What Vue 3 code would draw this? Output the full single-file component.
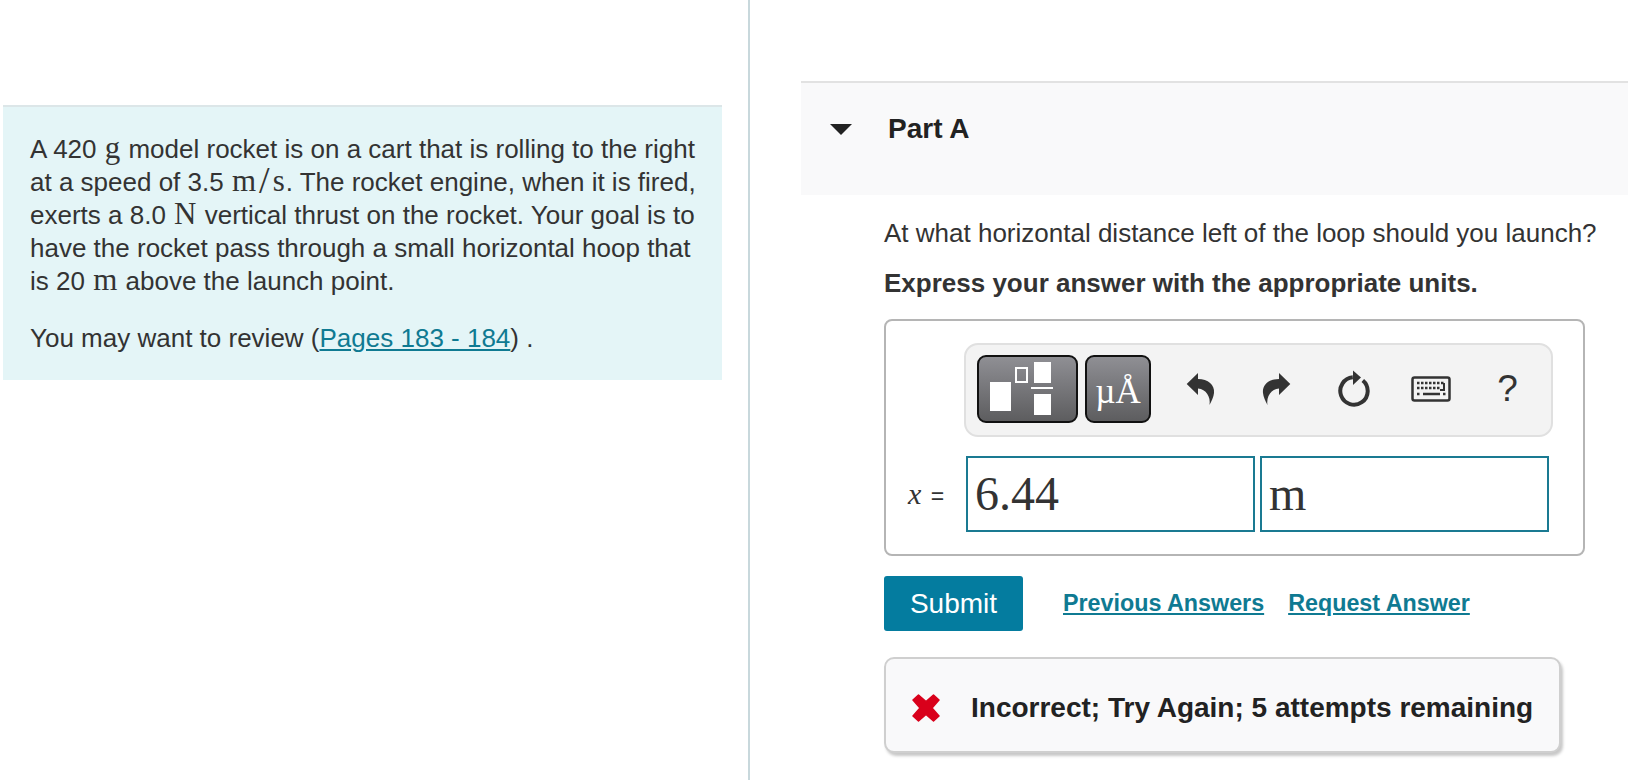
<script setup>
const attempts = 5;
</script>

<template>
  <main class="page">
    <section class="intro">
      <div class="intro-box">
        <p class="statement">
          <span class="line">A 420 <span class="unit">g</span> model rocket is on a cart that is rolling to the right</span>
          <span class="line">at a speed of 3.5 <span class="unit">m<span class="slash">/</span>s</span>. The rocket engine, when it is fired,</span>
          <span class="line">exerts a 8.0 <span class="unit">N</span> vertical thrust on the rocket. Your goal is to</span>
          <span class="line">have the rocket pass through a small horizontal hoop that</span>
          <span class="line">is 20 <span class="unit">m</span> above the launch point.</span>
        </p>
        <p class="review">You may want to review (<a href="#">Pages 183 - 184</a>) .</p>
      </div>
    </section>

    <section class="part">
      <header class="part-head">
        <span class="caret"></span>
        <h2>Part A</h2>
      </header>

      <div class="part-body">
        <p class="question">At what horizontal distance left of the loop should you launch?</p>
        <p class="hint">Express your answer with the appropriate units.</p>

        <div class="answer-box">
          <div class="toolbar">
            <button class="tool-btn frac-btn" aria-label="Templates">
              <svg width="97" height="64" viewBox="0 0 97 64">
                <rect x="11" y="25" width="21" height="29" fill="#fff" />
                <rect x="37" y="11" width="11" height="14" fill="none" stroke="#fff" stroke-width="2" />
                <rect x="55" y="5" width="17" height="21" fill="#fff" />
                <rect x="52" y="30" width="22" height="2" fill="#fff" />
                <rect x="55" y="37" width="17" height="21" fill="#fff" />
              </svg>
            </button>
            <button class="tool-btn unit-btn">µÅ</button>

            <span class="tool-icon">
              <svg width="32" height="36" viewBox="0 0 32 36">
                <path d="M2.700 13 14 2v6c10 0 17 6 16 14-.4 4-2.400 8-4.500 12 1.500-8-3.500-16-11.500-16.500V24Z" fill="#333" />
              </svg>
            </span>
            <span class="tool-icon">
              <svg width="32" height="36" viewBox="0 0 32 36">
                <path d="M29.300 13 18 2v6C8 8 1 14 2 22c.4 4 2.400 8 4.500 12-1.500-8 3.500-16 11.500-16.500V24Z" fill="#333" />
              </svg>
            </span>
            <span class="tool-icon">
              <svg width="36" height="38" viewBox="0 0 36 38">
                <path d="M26.800 10.500A13.700 13.700 0 1 1 16.800 7.350" fill="none" stroke="#333" stroke-width="4" />
                <path d="M17 0.500l8 7-8 7.500Z" fill="#333" />
              </svg>
            </span>
            <span class="tool-icon">
              <svg width="40" height="26" viewBox="0 0 40 26">
                <rect x="1.500" y="1.500" width="37" height="23" rx="2" fill="#f3f3f3" stroke="#333" stroke-width="2.500" />
                <path d="M6 7h28M6 12h24M6 18h3M32 18h3" stroke="#333" stroke-width="2.500" stroke-dasharray="2.500 1.500" fill="none" />
                <path d="M12 18h17" stroke="#333" stroke-width="2.500" />
                <path d="M33 7v7h-4" stroke="#333" stroke-width="2" fill="none" />
              </svg>
            </span>
            <span class="tool-icon help">?</span>
          </div>

          <div class="entry">
            <span class="var"><i>x</i> =</span>
            <div class="field">6.44</div>
            <div class="field">m</div>
          </div>
        </div>

        <div class="actions">
          <button class="submit">Submit</button>
          <a href="#" class="action-link">Previous Answers</a>
          <a href="#" class="action-link">Request Answer</a>
        </div>

        <div class="feedback">
          <svg class="cross" width="30" height="28" viewBox="0 0 30 28">
            <path d="M2 6 7.500 1 15 7.500 22.500 1 28 6 21 14 28 22 22.500 27 15 20.500 7.500 27 2 22 9 14Z" fill="#d9001b" stroke="#d9001b" stroke-width="1.500" stroke-linejoin="round" />
          </svg>
          <span>Incorrect; Try Again; {{ attempts }} attempts remaining</span>
        </div>
      </div>
    </section>
  </main>
</template>

<style scoped>
.page {
  display: flex;
  height: 780px;
  font-family: "Liberation Sans", Arial, sans-serif;
  color: #333;
  overflow: hidden;
}
.intro {
  flex: none;
  width: 745px;
  padding: 105px 0 0 3px;
  border-right: 2px solid #c8d8dc;
}
.intro-box {
  width: 719px;
  height: 275px;
  box-sizing: border-box;
  padding: 26px 20px 0 27px;
  background: #e4f5f7;
  border-top: 2px solid #dce6e8;
  font-size: 26px;
  line-height: 33px;
}
.statement,
.review {
  margin: 0;
}
.line {
  display: block;
  white-space: nowrap;
}
.review {
  margin-top: 24px;
}
.unit {
  margin: 0 1px;
  font-family: "Liberation Serif", serif;
  font-size: 31px;
  line-height: 0;
}
.slash {
  margin: 0 3px;
  font-size: 38px;
  vertical-align: -2px;
}
.intro-box a {
  color: #0f7a92;
}
.part {
  flex: 1;
  padding: 81px 0 0 51px;
  min-width: 0;
}
.part-head {
  display: flex;
  align-items: center;
  height: 114px;
  box-sizing: border-box;
  padding: 0 0 20px 29px;
  background: #f9f9fa;
  border-top: 2px solid #e2e2e2;
}
.caret {
  width: 0;
  height: 0;
  border-left: 11px solid transparent;
  border-right: 11px solid transparent;
  border-top: 11px solid #222;
}
.part-head h2 {
  margin: 0 0 0 36px;
  font-size: 28px;
  color: #222;
}
.part-body {
  padding: 22px 0 0 83px;
}
.question {
  margin: 0;
  font-size: 26px;
  line-height: 33px;
}
.hint {
  margin: 17px 0 0;
  font-size: 26px;
  line-height: 33px;
  font-weight: bold;
}
.answer-box {
  width: 701px;
  height: 237px;
  margin-top: 19px;
  box-sizing: border-box;
  padding: 22px 0 0 78px;
  border: 2px solid #b5b5b5;
  border-radius: 8px;
}
.toolbar {
  display: flex;
  align-items: center;
  width: 589px;
  height: 94px;
  box-sizing: border-box;
  padding: 0 0 3px 11px;
  background: #f3f3f3;
  border: 2px solid #e0e0e0;
  border-radius: 14px;
}
.tool-btn {
  height: 68px;
  padding: 0;
  display: flex;
  align-items: center;
  justify-content: center;
  background: linear-gradient(#8f8f94, #5d5d5f);
  border: 2px solid #111;
  border-radius: 9px;
  box-sizing: border-box;
}
.frac-btn {
  width: 101px;
}
.unit-btn {
  width: 66px;
  margin-left: 7px;
  margin-right: 10px;
  color: #fff;
  font-family: "Liberation Serif", serif;
  font-size: 35px;
  padding-top: 6px;
}
.tool-icon {
  width: 77px;
  display: flex;
  justify-content: center;
  align-items: center;
}
.help {
  font-size: 37px;
  color: #333;
}
.entry {
  display: flex;
  align-items: center;
  margin-top: 19px;
  padding-left: 2px;
}
.var {
  position: relative;
  width: 0;
  white-space: nowrap;
  left: -58px;
  font-size: 23px;
}
.var i {
  margin-right: 3px;
  font-family: "Liberation Serif", serif;
  font-size: 30px;
}
.field {
  width: 289px;
  height: 76px;
  box-sizing: border-box;
  padding-left: 7px;
  margin-right: 5px;
  border: 2px solid #1a7a92;
  font-family: "Liberation Serif", serif;
  font-size: 48px;
  line-height: 72px;
}
.actions {
  display: flex;
  align-items: center;
  margin-top: 20px;
}
.submit {
  width: 139px;
  height: 55px;
  padding: 0;
  background: #047c9f;
  color: #fff;
  border: none;
  border-radius: 3px;
  font-family: inherit;
  font-size: 28px;
}
.action-link {
  margin-left: 24px;
  font-size: 23.300px;
  font-weight: bold;
  color: #0f7a92;
}
.action-link:first-of-type {
  margin-left: 40px;
}
.feedback {
  display: flex;
  align-items: center;
  width: 677px;
  height: 96px;
  margin-top: 26px;
  box-sizing: border-box;
  padding: 5px 0 0 25px;
  background: #f9f9fa;
  border: 2px solid #cfcfcf;
  border-radius: 10px;
  box-shadow: 2px 3px 3px #c8c8c8;
  font-size: 28px;
  font-weight: bold;
  color: #222;
}
.cross {
  margin-right: 30px;
  flex: none;
}
</style>

<style>
body {
  margin: 0;
  background: #fff;
}
</style>
